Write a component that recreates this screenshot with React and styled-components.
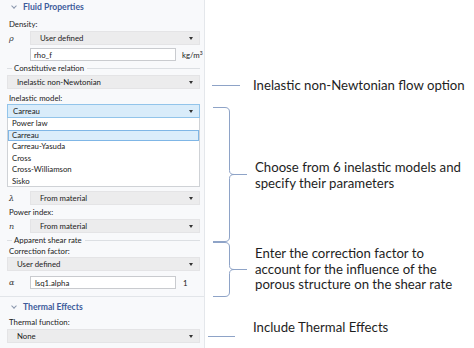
import React from "react";
import styled, { createGlobalStyle } from "styled-components";

const Global = createGlobalStyle`
  html, body { margin: 0; padding: 0; background: #fff; }
  * { box-sizing: border-box; }
`;

const Page = styled.div`
  display: flex;
  width: 474px;
  height: 348px;
  overflow: hidden;
  background: #fff;
`;

const Panel = styled.div`
  width: 205px;
  flex: none;
  padding: 0 4px 0 7px;
  background: #f8f9fb;
  border-right: 1px solid #e4e7eb;
  font-family: "Lato", "Open Sans", sans-serif;
  font-size: 7.8px;
  color: #222;
`;

const SectionHeader = styled.div`
  display: flex;
  align-items: center;
  height: 14px;
  padding-left: 5px;
  margin-top: ${(p) => p.top || 0}px;
  color: #3d5c9b;
  font-size: 8.6px;
  font-weight: 700;
  ${(p) => p.divided && "border-top: 1px solid #e2e5e9; margin-left: -7px; margin-right: -4px; padding-left: 12px; height: 17px; padding-top: 3px;"}
`;

const Chevron = styled.span`
  display: inline-block;
  width: 4px;
  height: 4px;
  margin: -2px 7px 0 0;
  border-right: 1px solid #8a97ad;
  border-bottom: 1px solid #8a97ad;
  transform: rotate(45deg);
`;

const Label = styled.div`
  height: 10px;
  line-height: 10px;
  padding-left: 2px;
  margin-top: ${(p) => p.top || 0}px;
`;

const GroupTitle = styled.div`
  display: flex;
  align-items: center;
  height: 10px;
  margin-top: ${(p) => p.top || 0}px;
  &::before {
    content: "";
    width: 5px;
    height: 1px;
    background: #dcdfe3;
    margin-right: 2px;
  }
  &::after {
    content: "";
    flex: 1;
    height: 1px;
    background: #dcdfe3;
    margin-left: 3px;
  }
`;

const Row = styled.div`
  display: flex;
  align-items: center;
  margin-top: ${(p) => p.top || 0}px;
`;

const Symbol = styled.span`
  width: 23px;
  flex: none;
  padding-left: 2px;
  font-family: "DejaVu Serif", serif;
  font-style: italic;
  font-size: 8px;
  color: #333;
`;

const Select = styled.div`
  position: relative;
  flex: 1;
  display: flex;
  align-items: center;
  height: 14px;
  padding-left: ${(p) => (p.open ? 5 : 9)}px;
  margin-top: ${(p) => p.top || 0}px;
  background: ${(p) => (p.open ? "#d9ecfa" : "#ececed")};
  border: 1px solid ${(p) => (p.open ? "#92c4ea" : "#e4e4e6")};
  &::after {
    content: "";
    position: absolute;
    right: 6px;
    top: 5px;
    border-left: 2px solid transparent;
    border-right: 2px solid transparent;
    border-top: 3px solid #333;
  }
`;

const Input = styled.div`
  flex: none;
  width: 146px;
  height: 13px;
  display: flex;
  align-items: center;
  padding-left: ${(p) => p.pad || 3}px;
  background: #fff;
  border: 1px solid #c9cbcf;
`;

const Unit = styled.span`
  margin-left: ${(p) => p.gap || 6}px;
`;

const Sup = styled.sup`
  font-size: 5px;
  vertical-align: 3px;
`;

const List = styled.div`
  height: 69px;
  background: #fff;
  border: 1px solid #cfd2d6;
  border-top: none;
`;

const Item = styled.div`
  height: 11.5px;
  line-height: 11px;
  padding-left: 4px;
  ${(p) =>
    p.active &&
    "background: #dbedfb; border: 1px solid #7fb6e6; padding-left: 3px; line-height: 9.5px;"}
`;

const Notes = styled.div`
  flex: 1;
  display: flex;
  flex-direction: column;
  font-family: "Lato", "Open Sans", sans-serif;
  font-size: 13.2px;
  color: #1e1e1e;
`;

const Note = styled.div`
  display: flex;
  align-items: center;
  height: ${(p) => p.h}px;
  margin-top: ${(p) => p.top || 0}px;
  padding-left: ${(p) => p.indent || 0}px;
`;

const NoteText = styled.div`
  margin-left: ${(p) => p.gap}px;
  line-height: ${(p) => p.lh || 16}px;
  white-space: nowrap;
`;

const stroke = "#8ea3c7";

const Dash = ({ w, h, y }) => (
  <svg width={w} height={h} style={{ flex: "none", alignSelf: "flex-start" }}>
    <line x1="0" y1={y} x2={w} y2={y} stroke={stroke} strokeWidth="1" />
  </svg>
);

const Brace = ({ h }) => {
  const m = h / 2;
  const d = `M0 0.5 H12 Q16.5 0.5 16.5 5 V${m - 4} Q16.5 ${m} 21 ${m} H34 M21 ${m} Q16.5 ${m} 16.5 ${m + 4} V${h - 5} Q16.5 ${h - 0.5} 12 ${h - 0.5} H0`;
  return (
    <svg width="34" height={h} style={{ flex: "none" }}>
      <path d={d} fill="none" stroke={stroke} strokeWidth="1" />
    </svg>
  );
};

export default function App() {
  return (
    <Page>
      <Global />
      <Panel>
        <SectionHeader>
          <Chevron />
          Fluid Properties
        </SectionHeader>
        <Label top={5}>Density:</Label>
        <Row top={2}>
          <Symbol>ρ</Symbol>
          <Select>User defined</Select>
        </Row>
        <Row top={3}>
          <Symbol />
          <Input>rho_f</Input>
          <Unit>
            kg/m<Sup>3</Sup>
          </Unit>
        </Row>
        <GroupTitle top={2}>Constitutive relation</GroupTitle>
        <Select top={2}>Inelastic non-Newtonian</Select>
        <Label top={4}>Inelastic model:</Label>
        <Select open top={1}>Carreau</Select>
        <List>
          <Item>Power law</Item>
          <Item active>Carreau</Item>
          <Item>Carreau-Yasuda</Item>
          <Item>Cross</Item>
          <Item>Cross-Williamson</Item>
          <Item>Sisko</Item>
        </List>
        <Row top={4}>
          <Symbol>λ</Symbol>
          <Select>From material</Select>
        </Row>
        <Label top={2}>Power index:</Label>
        <Row top={2}>
          <Symbol>n</Symbol>
          <Select>From material</Select>
        </Row>
        <GroupTitle top={2}>Apparent shear rate</GroupTitle>
        <Label top={1}>Correction factor:</Label>
        <Select top={1}>User defined</Select>
        <Row top={5}>
          <Symbol>α</Symbol>
          <Input pad={4}>lsq1.alpha</Input>
          <Unit gap={7}>1</Unit>
        </Row>
        <SectionHeader divided top={7}>
          <Chevron />
          Thermal Effects
        </SectionHeader>
        <Label top={4}>Thermal function:</Label>
        <Select top={2}>None</Select>
      </Panel>
      <Notes>
        <Note h={16} top={77} indent={7}>
          <Dash w={28} h={16} y={8.5} />
          <NoteText gap={13}>Inelastic non-Newtonian flow option</NoteText>
        </Note>
        <Note h={135} top={14} indent={8}>
          <Brace h={135} />
          <NoteText gap={8}>
            Choose from 6 inelastic models and
            <br />
            specify their parameters
          </NoteText>
        </Note>
        <Note h={55} indent={8}>
          <Brace h={55} />
          <NoteText gap={8} lh={15.5}>
            Enter the correction factor to
            <br />
            account for the influence of the
            <br />
            porous structure on the shear rate
          </NoteText>
        </Note>
        <Note h={18} top={21} indent={3}>
          <Dash w={27} h={20} y={18.5} />
          <NoteText gap={18}>Include Thermal Effects</NoteText>
        </Note>
      </Notes>
    </Page>
  );
}
